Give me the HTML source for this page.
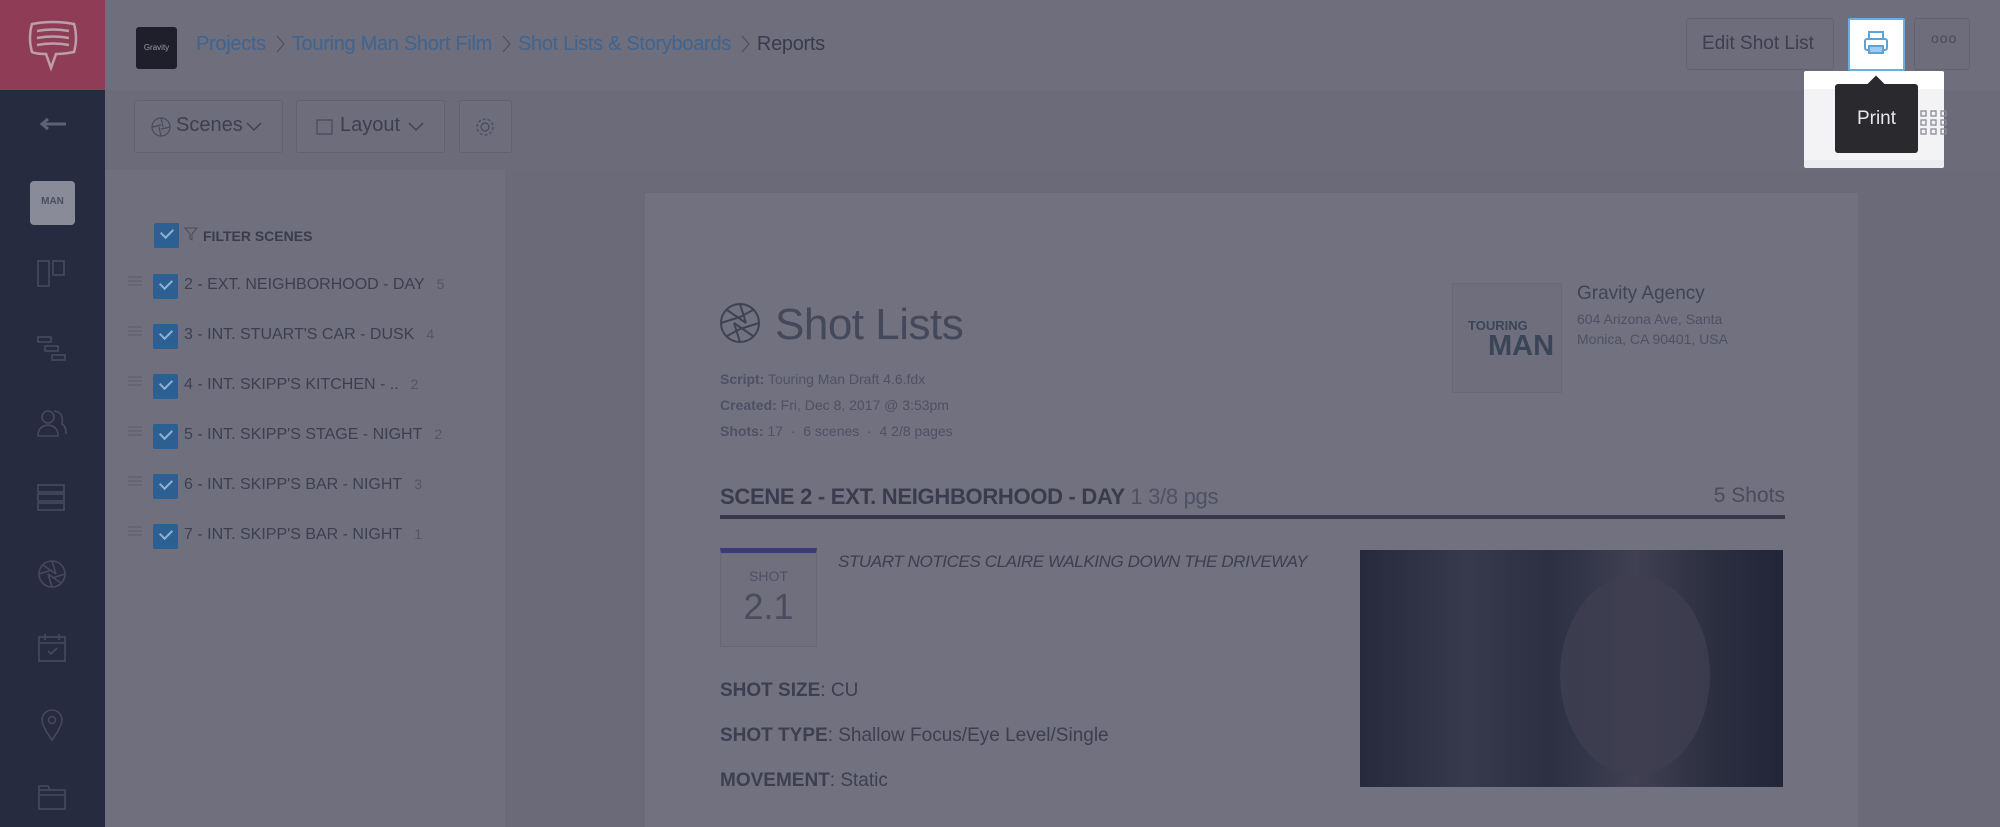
<!DOCTYPE html>
<html><head><meta charset="utf-8"><style>
*{box-sizing:border-box;margin:0;padding:0}
body{width:2000px;height:827px;overflow:hidden;background:#6a6a78;font-family:"Liberation Sans",sans-serif;color:#3a3b4d;position:relative}
.a{position:absolute}
.side{left:0;top:0;width:105px;height:827px;background:#272b3f}
.logo{left:0;top:0;width:105px;height:90px;background:#8f3d57}
.hdr{left:105px;top:0;width:1895px;height:90px;background:#6e6e7c}
.bcw{left:196px;top:32px;font-size:20px;color:#3f6490;display:flex;align-items:center;white-space:nowrap;letter-spacing:-0.3px}
.bcw svg{margin:0 6px 0 8px}
.btn{border:1px solid #62626f;border-radius:3px;background:#6d6d7b}
.lp{left:105px;top:170px;width:400px;height:657px;background:#6f6f7d}
.cb{width:25px;height:25px;background:#2c5f92;border-radius:2px}
.cb:after{content:"";position:absolute;left:7px;top:5px;width:10px;height:6px;border-left:2px solid #8fb0d0;border-bottom:2px solid #8fb0d0;transform:rotate(-45deg)}
.row{font-size:16px;color:#3d3e50;left:184px;top:0}
.row span{font-size:14px;color:#55566a;margin-left:12px}
.hb{left:128px;width:14px;height:10px;border-top:2px solid #656573;border-bottom:2px solid #656573}
.hb:after{content:"";position:absolute;left:0;top:2px;width:14px;border-top:2px solid #656573}
.paper{left:645px;top:193px;width:1213px;height:634px;background:#71717f}
.ic path,.ic rect,.ic circle{fill:none;stroke:#474a5f;stroke-width:1.6}
</style></head><body>
<div class="a side"></div>
<div class="a logo"></div>
<svg class="a" style="left:26px;top:20px" width="54" height="52" viewBox="0 0 54 52"><path d="M6 4 Q27 0 48 4 Q52 18 48 32 Q38 34 30 34 L25 48 L20 34 Q10 34 6 32 Q2 18 6 4Z" fill="none" stroke="#b9a0aa" stroke-width="2.5"/><path d="M11 11 Q27 8 43 11 M11 18 Q27 15 43 18 M11 25 Q27 22 43 25" stroke="#b9a0aa" stroke-width="2.5" fill="none"/></svg>
<svg class="a" style="left:40px;top:118px" width="26" height="12"><path d="M26 6H4 M8 1L2 6L8 11" stroke="#5e6275" stroke-width="3" fill="none"/></svg>
<div class="a" style="left:30px;top:181px;width:45px;height:44px;background:#8a8b98;border-radius:4px;font-size:10px;font-weight:bold;color:#4a4e60;text-align:center;line-height:42px">MAN</div>
<svg class="a ic" style="left:36px;top:258px" width="32" height="32"><rect x="2" y="3" width="11" height="25"/><rect x="17" y="3" width="11" height="14"/></svg>
<svg class="a ic" style="left:36px;top:334px" width="32" height="30"><rect x="2" y="3" width="13" height="5"/><rect x="9" y="12" width="13" height="5"/><rect x="16" y="21" width="13" height="5"/></svg>
<svg class="a ic" style="left:36px;top:408px" width="32" height="32"><circle cx="12" cy="9" r="6"/><path d="M2 28 Q2 18 12 17 Q22 18 22 28Z M18 3 Q28 4 26 16 Q30 18 30 26"/></svg>
<svg class="a ic" style="left:36px;top:483px" width="32" height="30"><rect x="2" y="2" width="26" height="7"/><rect x="2" y="11" width="26" height="7"/><rect x="2" y="20" width="26" height="7"/></svg>
<svg class="a ic" style="left:36px;top:558px" width="32" height="32"><circle cx="16" cy="16" r="13"/><path d="M16 3 L20 16 M29 16 L16 20 M16 29 L12 16 M3 16 L16 12 M7 7 L20 16 M25 25 L12 16"/></svg>
<svg class="a ic" style="left:36px;top:632px" width="32" height="32"><rect x="3" y="5" width="26" height="24"/><path d="M3 11H29 M9 2V8 M23 2V8 M12 19 L15 22 L21 16"/></svg>
<svg class="a ic" style="left:40px;top:708px" width="26" height="34"><path d="M12 32 Q2 18 2 12 A10 10 0 0 1 22 12 Q22 18 12 32Z"/><circle cx="12" cy="12" r="3.5"/></svg>
<svg class="a ic" style="left:36px;top:784px" width="32" height="28"><rect x="3" y="6" width="26" height="19"/><path d="M3 6 V2 H12 L14 6 M3 11 H29"/></svg>

<div class="a hdr"></div>
<div class="a" style="left:105px;top:90px;width:1895px;height:80px;background:#6b6b79"></div>
<div class="a" style="left:136px;top:27px;width:41px;height:42px;background:#1e1f2a;border-radius:3px;color:#9a9aa8;font-size:8px;text-align:center;line-height:42px">Gravity</div>
<div class="a bcw">Projects<svg width="12" height="24"><path d="M3 4 L10 12 L3 20" stroke="#4f5264" stroke-width="1.3" fill="none"/></svg>Touring Man Short Film<svg width="12" height="24"><path d="M3 4 L10 12 L3 20" stroke="#4f5264" stroke-width="1.3" fill="none"/></svg>Shot Lists &amp; Storyboards<svg width="12" height="24"><path d="M3 4 L10 12 L3 20" stroke="#4f5264" stroke-width="1.3" fill="none"/></svg><span style="color:#3a3b4d">Reports</span></div>
<div class="a btn" style="left:134px;top:100px;width:149px;height:53px"></div>
<div class="a btn" style="left:296px;top:100px;width:149px;height:53px"></div>
<div class="a btn" style="left:459px;top:100px;width:53px;height:53px"></div>
<svg class="a ic" style="left:150px;top:116px" width="22" height="22"><circle cx="11" cy="11" r="9" style="stroke-width:1.2"/><path d="M11 2 L13 11 M20 11 L11 13 M11 20 L9 11 M2 11 L11 9" style="stroke-width:1.2"/></svg>
<div class="a" style="left:176px;top:114px;font-size:20px;color:#3d3e50">Scenes</div>
<svg class="a" style="left:245px;top:121px" width="18" height="12"><path d="M2 2 L9 9 L16 2" stroke="#3d3e50" fill="none" stroke-width="1.3"/></svg>
<svg class="a ic" style="left:315px;top:118px" width="20" height="18"><rect x="2" y="2" width="15" height="14" style="stroke-width:1.2"/></svg>
<div class="a" style="left:340px;top:114px;font-size:20px;color:#3d3e50">Layout</div>
<svg class="a" style="left:407px;top:121px" width="18" height="12"><path d="M2 2 L9 9 L16 2" stroke="#3d3e50" fill="none" stroke-width="1.3"/></svg>
<svg class="a ic" style="left:474px;top:116px" width="22" height="22"><circle cx="11" cy="11" r="4" style="stroke-width:1.2"/><circle cx="11" cy="11" r="8" style="stroke-width:1.2;stroke-dasharray:3 2"/></svg>

<div class="a btn" style="left:1686px;top:18px;width:148px;height:52px"></div>
<div class="a" style="left:1702px;top:33px;font-size:19px;color:#3d3e50">Edit Shot List</div>
<div class="a btn" style="left:1914px;top:18px;width:56px;height:52px"></div>
<div class="a" style="left:1931px;top:30px;font-size:14px;color:#4a4b5d;letter-spacing:1px">ooo</div>
<div class="a" style="left:1804px;top:71px;width:140px;height:97px;background:#f3f3f6;border-top:18px solid #fff;border-bottom:8px solid #ebebf0;border-radius:2px"></div>
<div class="a" style="left:1848px;top:18px;width:57px;height:53px;background:#fff;border:2px solid #6aaee0;border-radius:2px"></div>
<svg class="a" style="left:1863px;top:30px" width="26" height="28"><g fill="none" stroke="#5ea3d6" stroke-width="2"><rect x="6" y="2" width="14" height="7"/><rect x="2" y="9" width="22" height="11" rx="2"/><rect x="6" y="16" width="14" height="7" fill="#9fcbee"/></g></svg>
<svg class="a" style="left:1855px;top:110px" width="110" height="30"><g fill="none" stroke="#8a8a96" stroke-width="1.3"><rect x="1" y="20" width="5" height="5"/><rect x="9" y="20" width="12" height="5"/><path d="M34 3H48 M34 12H48 M34 21H48"/><rect x="50" y="1" width="5" height="5"/><rect x="50" y="10" width="5" height="5"/><rect x="50" y="19" width="5" height="5"/><rect x="66" y="1" width="5" height="5"/><rect x="66" y="10" width="5" height="5"/><rect x="66" y="19" width="5" height="5"/><rect x="76" y="1" width="5" height="5"/><rect x="76" y="10" width="5" height="5"/><rect x="76" y="19" width="5" height="5"/><rect x="86" y="1" width="5" height="5"/><rect x="86" y="10" width="5" height="5"/><rect x="86" y="19" width="5" height="5"/></g></svg>
<div class="a" style="left:1835px;top:84px;width:83px;height:69px;background:#2a2a2e;border-radius:3px;color:#e8e8e8;font-size:19px;text-align:center;line-height:69px">Print</div>
<div class="a" style="left:1870px;top:78px;width:12px;height:12px;background:#2a2a2e;transform:rotate(45deg)"></div>

<div class="a lp"></div>
<div class="a cb" style="left:154px;top:223px"></div>
<svg class="a" style="left:184px;top:227px" width="14" height="14"><path d="M1 1H13L8 7V13L6 12V7Z" fill="none" stroke="#4a4b5d" stroke-width="1"/></svg>
<div class="a" style="left:203px;top:228px;font-size:14px;font-weight:bold;color:#3a3b4d">FILTER SCENES</div>
<div class="a hb" style="top:276px"></div><div class="a cb" style="left:153px;top:274px"></div><div class="a row" style="top:276px">2 - EXT. NEIGHBORHOOD - DAY<span>5</span></div>
<div class="a hb" style="top:326px"></div><div class="a cb" style="left:153px;top:324px"></div><div class="a row" style="top:326px">3 - INT. STUART'S CAR - DUSK<span>4</span></div>
<div class="a hb" style="top:376px"></div><div class="a cb" style="left:153px;top:374px"></div><div class="a row" style="top:376px">4 - INT. SKIPP'S KITCHEN - ..<span>2</span></div>
<div class="a hb" style="top:426px"></div><div class="a cb" style="left:153px;top:424px"></div><div class="a row" style="top:426px">5 - INT. SKIPP'S STAGE - NIGHT<span>2</span></div>
<div class="a hb" style="top:476px"></div><div class="a cb" style="left:153px;top:474px"></div><div class="a row" style="top:476px">6 - INT. SKIPP'S BAR - NIGHT<span>3</span></div>
<div class="a hb" style="top:526px"></div><div class="a cb" style="left:153px;top:524px"></div><div class="a row" style="top:526px">7 - INT. SKIPP'S BAR - NIGHT<span>1</span></div>

<div class="a paper"></div>
<svg class="a" style="left:719px;top:302px" width="42" height="42"><g fill="none" stroke="#3f4155" stroke-width="2"><circle cx="21" cy="21" r="19"/><path d="M21 2 L27 21 M40 21 L21 27 M21 40 L15 21 M2 21 L21 15 M8 8 L27 21 M34 34 L15 21 M34 8 L21 15 M8 34 L21 27"/></g></svg>
<div class="a" style="left:775px;top:300px;font-size:44px;color:#45475b;letter-spacing:-0.5px">Shot Lists</div>
<div class="a" style="left:720px;top:366px;font-size:14px;color:#4f5064;line-height:26px"><b>Script:</b> Touring Man Draft 4.6.fdx<br><b>Created:</b> Fri, Dec 8, 2017 @ 3:53pm<br><b>Shots:</b> 17 &nbsp;·&nbsp; 6 scenes &nbsp;·&nbsp; 4 2/8 pages</div>
<div class="a" style="left:1452px;top:283px;width:110px;height:110px;background:#6e6e7c;border:1px solid #6a6a77"></div>
<div class="a" style="left:1468px;top:318px;font-size:13px;font-weight:bold;color:#3b4558">TOURING</div>
<div class="a" style="left:1488px;top:330px;font-size:29px;font-weight:bold;color:#3b4558">MAN</div>
<div class="a" style="left:1577px;top:283px;font-size:19px;color:#414356">Gravity Agency</div>
<div class="a" style="left:1577px;top:309px;font-size:14px;color:#4f5064;line-height:20px">604 Arizona Ave, Santa<br>Monica, CA 90401, USA</div>
<div class="a" style="left:720px;top:484px;font-size:22px;font-weight:bold;color:#3a3b4d;letter-spacing:-0.3px">SCENE 2 - EXT. NEIGHBORHOOD - DAY <span style="font-weight:normal;color:#4f5064">1 3/8 pgs</span></div>
<div class="a" style="left:1650px;top:484px;width:135px;text-align:right;font-size:21px;color:#4a4b5d">5 Shots</div>
<div class="a" style="left:720px;top:515px;width:1065px;height:4px;background:#35374a"></div>
<div class="a" style="left:720px;top:548px;width:97px;height:99px;border:1px solid #686875;border-top:5px solid #3b3a7a;background:#6f6f7d"></div>
<div class="a" style="left:720px;top:568px;width:97px;text-align:center;font-size:14px;color:#4f5064">SHOT</div>
<div class="a" style="left:720px;top:586px;width:97px;text-align:center;font-size:36px;color:#4a4b5d">2.1</div>
<div class="a" style="left:838px;top:552px;font-size:17px;font-style:italic;color:#3d3e50;letter-spacing:-0.4px">STUART NOTICES CLAIRE WALKING DOWN THE DRIVEWAY</div>
<div class="a" style="left:1360px;top:550px;width:423px;height:237px;background:linear-gradient(90deg,#262a3c 0%,#363a4c 25%,#2c3042 45%,#404052 65%,#2b2e3f 85%,#232638 100%)"></div>
<div class="a" style="left:1560px;top:575px;width:150px;height:200px;border-radius:50%;background:#3e3e50;opacity:.8"></div>
<div class="a" style="left:720px;top:668px;font-size:19px;color:#3d3e50;line-height:45px"><b>SHOT SIZE</b>: CU<br><b>SHOT TYPE</b>: Shallow Focus/Eye Level/Single<br><b>MOVEMENT</b>: Static</div>
</body></html>
